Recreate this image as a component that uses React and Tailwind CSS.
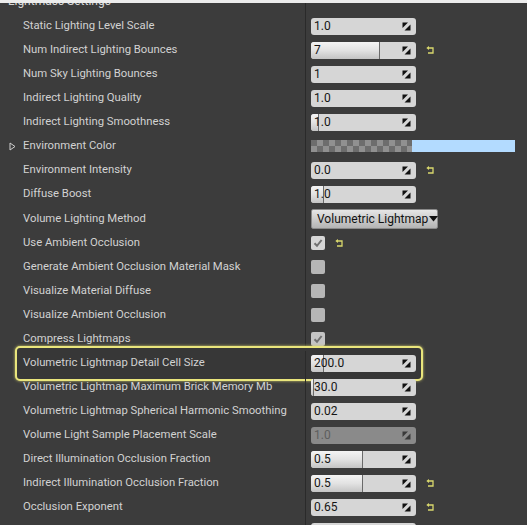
import React from "react";

const font = { fontFamily: "Roboto, 'Noto Sans', sans-serif" };

function SpinIcon({ color = "#111" }) {
  return (
    <svg width="9" height="9" viewBox="0 0 9 9" className="shrink-0">
      <polygon points="0.5,0.5 6,0.5 0.5,6" fill={color} />
      <polygon points="8.5,2.5 8.5,8.5 2.5,8.5" fill={color} />
    </svg>
  );
}

function ResetIcon() {
  return (
    <svg width="9" height="9" viewBox="0 0 9 9" className="shrink-0">
      <path d="M2.6 2 H7 V7 H2" fill="none" stroke="#d9d86c" strokeWidth="1.3" />
      <polygon points="0.3,2 3,0 3,4" fill="#d9d86c" />
    </svg>
  );
}

function NumInput({ value, fill, disabled }) {
  if (disabled) {
    return (
      <div className="relative flex h-[17px] w-[105px] items-center rounded-[3px] bg-[#8a8a8a] pl-[3px] pr-[5px]">
        <span className="flex-1 text-[12px] leading-none text-[#5e5e5e]">{value}</span>
        <SpinIcon color="#3a3a3a" />
      </div>
    );
  }
  return (
    <div className="relative flex h-[17px] w-[105px] items-center overflow-hidden rounded-[3px] bg-[#d6d6d6] pl-[3px] pr-[5px]">
      {fill != null && (
        <div
          className="absolute left-0 top-0 h-full border-r border-[#6a6a6a] bg-gradient-to-b from-[#f4f4f4] via-[#e2e2e2] to-[#c4c4c4]"
          style={{ width: fill }}
        />
      )}
      <span className="relative flex-1 text-[12px] leading-none text-[#151515]">{value}</span>
      <span className="relative">
        <SpinIcon />
      </span>
    </div>
  );
}

function Check({ checked, faded }) {
  return (
    <div
      className={
        "flex h-[14px] w-[14px] items-center justify-center rounded-[2px] " +
        (checked ? (faded ? "bg-[#c4c4c4]" : "bg-[#d6d6d6]") : "bg-[#b6b6b6]")
      }
    >
      {checked && (
        <svg width="10" height="10" viewBox="0 0 10 10">
          <path d="M1.5 5.2 L4 7.8 L8.6 2" fill="none" stroke="#707070" strokeWidth="2" />
        </svg>
      )}
    </div>
  );
}

function Dropdown() {
  return (
    <div className="flex h-[20px] w-[127px] items-center gap-[1px] rounded-[2px] border border-[#8a8a8a] bg-gradient-to-b from-[#e6e6e6] to-[#b4b4b4] pl-[5px] pr-[3px]">
      <span className="whitespace-nowrap text-[12px] leading-none text-[#111]">Volumetric Lightmap</span>
      <svg width="9" height="6" viewBox="0 0 9 6" className="shrink-0">
        <polygon points="0,0 9,0 4.5,5.5" fill="#111" />
      </svg>
    </div>
  );
}

function ColorBar() {
  return (
    <div className="flex h-[12px] w-[204px]">
      <div className="h-full w-[101px] bg-[conic-gradient(#909090_25%,#6d6d6d_0_50%,#909090_0_75%,#6d6d6d_0)] bg-size-[12px_12px]" />
      <div className="h-full flex-1 bg-[#b3dbff]" />
    </div>
  );
}

const rows = [
  { label: "Static Lighting Level Scale", type: "num", value: "1.0" },
  { label: "Num Indirect Lighting Bounces", type: "num", value: "7", fill: 69, reset: true },
  { label: "Num Sky Lighting Bounces", type: "num", value: "1" },
  { label: "Indirect Lighting Quality", type: "num", value: "1.0" },
  { label: "Indirect Lighting Smoothness", type: "num", value: "1.0", fill: 8 },
  { label: "Environment Color", type: "color", arrow: true },
  { label: "Environment Intensity", type: "num", value: "0.0", reset: true },
  { label: "Diffuse Boost", type: "num", value: "1.0", fill: 13 },
  { label: "Volume Lighting Method", type: "dropdown", tall: true },
  { label: "Use Ambient Occlusion", type: "check", checked: true, reset: true },
  { label: "Generate Ambient Occlusion Material Mask", type: "check", checked: false },
  { label: "Visualize Material Diffuse", type: "check", checked: false },
  { label: "Visualize Ambient Occlusion", type: "check", checked: false },
  { label: "Compress Lightmaps", type: "check", checked: true, faded: true },
  { label: "Volumetric Lightmap Detail Cell Size", type: "num", value: "200.0", fill: 13, highlight: true },
  { label: "Volumetric Lightmap Maximum Brick Memory Mb", type: "num", value: "30.0", fill: 3 },
  { label: "Volumetric Lightmap Spherical Harmonic Smoothing", type: "num", value: "0.02" },
  { label: "Volume Light Sample Placement Scale", type: "num", value: "1.0", disabled: true },
  { label: "Direct Illumination Occlusion Fraction", type: "num", value: "0.5", fill: 52 },
  { label: "Indirect Illumination Occlusion Fraction", type: "num", value: "0.5", fill: 52, reset: true },
  { label: "Occlusion Exponent", type: "num", value: "0.65", reset: true },
  { label: "", type: "num", value: "" },
];

function Row({ r }) {
  let control = null;
  if (r.type === "num") control = <NumInput value={r.value} fill={r.fill} disabled={r.disabled} />;
  if (r.type === "check") control = <Check checked={r.checked} faded={r.faded} />;
  if (r.type === "dropdown") control = <Dropdown />;
  if (r.type === "color") control = <ColorBar />;
  return (
    <div className={"relative flex " + (r.tall ? "h-[25px]" : "h-[24px]")}>
      {r.highlight && (
        <div className="absolute left-[15px] top-[-5px] h-[35px] w-[408px] rounded-[5px] border-2 border-[#e9e57c] bg-[#373737] shadow-[0_0_3px_#c8c46a]" />
      )}
      <div className="relative flex w-[306px] shrink-0 items-center border-r border-[#2a2a2a]">
        <div className="flex w-[23px] justify-center pl-[2px]">
          {r.arrow && (
            <svg width="7" height="9" viewBox="0 0 7 9">
              <polygon points="1,1 6,4.5 1,8" fill="none" stroke="#cfcfcf" strokeWidth="1" />
            </svg>
          )}
        </div>
        <span className="whitespace-nowrap text-[11.3px] leading-none text-[#d2d2d2]">{r.label}</span>
      </div>
      <div className="relative flex items-center gap-[10px] pl-[5px]">
        {control}
        {r.reset && <ResetIcon />}
      </div>
    </div>
  );
}

export default function App() {
  return (
    <div className="h-[525px] w-[527px] overflow-hidden bg-[#3c3c3c]" style={font}>
      <div className="relative flex h-[14px] overflow-hidden">
        <div className="w-[306px] shrink-0 border-r border-[#2a2a2a] pl-[8px]">
          <span className="mt-[-5px] block whitespace-nowrap text-[12px] leading-[12px] text-[#d8d8d8]">
            Lightmass Settings
          </span>
        </div>
        <div className="pl-[12px]">
          <div className="mt-[-3px] h-[6px] w-[5px] rounded-b-[2px] bg-[#c9c66a]" />
        </div>
        <div className="absolute left-0 top-0 h-[3px] w-full bg-[#ececec]" />
      </div>
      {rows.map((r, i) => (
        <Row key={i} r={r} />
      ))}
    </div>
  );
}
